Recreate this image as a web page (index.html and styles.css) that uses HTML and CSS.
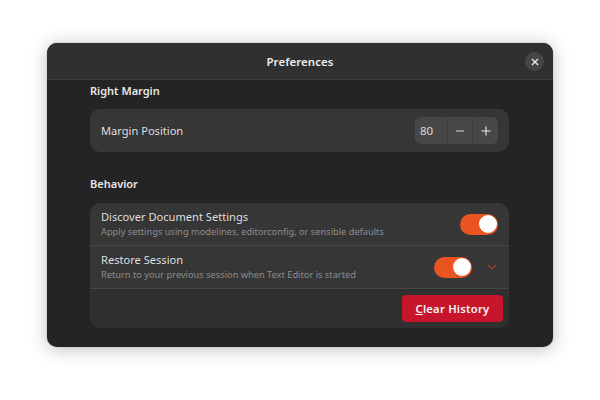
FILE: index.html
```html
<!DOCTYPE html>
<html lang="en">
<head>
<meta charset="utf-8">
<title>Preferences</title>
<link rel="stylesheet" href="styles.css">
</head>
<body>
<div class="window">
  <header class="header">
    <span class="title">Preferences</span>
    <button class="close" aria-label="Close">
      <svg width="8" height="8" viewBox="0 0 8 8"><path d="M1 1l6 6M7 1l-6 6" stroke="#eee" stroke-width="1.3" fill="none"/></svg>
    </button>
  </header>
  <main class="content">
    <h2 class="section-title first">Right Margin</h2>
    <section class="card">
      <div class="row margin-row">
        <span class="row-title">Margin Position</span>
        <div class="spin">
          <span class="spin-value">80</span>
          <span class="spin-btn minus"><svg width="10" height="10" viewBox="0 0 10 10"><path d="M1 5h8" stroke="#d8d8d8" stroke-width="1.1"/></svg></span>
          <span class="spin-btn"><svg width="10" height="10" viewBox="0 0 10 10"><path d="M.5 5h9M5 .5v9" stroke="#eee" stroke-width="1.1"/></svg></span>
        </div>
      </div>
    </section>
    <h2 class="section-title second">Behavior</h2>
    <section class="card">
      <div class="row tall">
        <div class="labels">
          <span class="row-title">Discover Document Settings</span>
          <span class="row-sub">Apply settings using modelines, editorconfig, or sensible defaults</span>
        </div>
        <span class="switch"><span class="knob"></span></span>
      </div>
      <div class="row tall session">
        <div class="labels">
          <span class="row-title">Restore Session</span>
          <span class="row-sub">Return to your previous session when Text Editor is started</span>
        </div>
        <span class="switch"><span class="knob"></span></span>
        <svg class="chevron" width="10" height="6" viewBox="0 0 10 6"><path d="M1.2 1l3.8 3.8L8.8 1" stroke="#9a4a2c" stroke-width="1.2" fill="none"/></svg>
      </div>
      <div class="row action">
        <button class="danger"><u>C</u>lear History</button>
      </div>
    </section>
  </main>
</div>
</body>
</html>
```
FILE: styles.css
```css
* { box-sizing: border-box; }
html, body { margin: 0; height: 100%; }
body {
  width: 600px;
  height: 400px;
  background: #fff;
  padding: 43px 47px 53px;
  font-family: "Noto Sans", "Open Sans", sans-serif;
  overflow: hidden;
}
.window {
  width: 506px;
  height: 304px;
  background: #242424;
  border-radius: 10px;
  box-shadow: 0 2px 18px rgba(0,0,0,.26), 0 0 1px rgba(0,0,0,.5);
  overflow: hidden;
  display: flex;
  flex-direction: column;
}
.header {
  height: 37px;
  flex: none;
  background: #303030;
  border-bottom: 1px solid #3f3f3f;
  display: flex;
  align-items: center;
  justify-content: center;
  position: relative;
}
.title {
  color: #eeeeee;
  font-size: 11.4px;
  font-weight: 600;
  letter-spacing: .1px;
}
.close {
  position: absolute;
  right: 9px;
  top: 9px;
  width: 19px;
  height: 19px;
  padding: 0;
  border: 0;
  border-radius: 50%;
  background: #464646;
  display: flex;
  align-items: center;
  justify-content: center;
}
.content {
  padding: 0 44px 0 43px;
  display: flex;
  flex-direction: column;
}
.section-title {
  margin: 0;
  color: #e8e8e8;
  font-size: 11px;
  font-weight: 600;
  line-height: 20px;
}
.first { margin-top: 1px; margin-bottom: 8px; }
.second { margin-top: 22px; margin-bottom: 9px; }
.card {
  background: #363636;
  border-radius: 10px;
  overflow: hidden;
  display: flex;
  flex-direction: column;
}
.row {
  display: flex;
  align-items: center;
  padding: 0 11px;
}
.margin-row { height: 43px; justify-content: space-between; }
.tall { height: 43px; border-bottom: 1px solid #474747; justify-content: space-between; }
.labels { display: flex; flex-direction: column; gap: 1px; margin-top: -1px; }
.row-title {
  color: #dedede;
  font-size: 11.1px;
  line-height: 15px;
}
.margin-row .row-title { margin-top: -1px; }
.row-sub {
  color: #8c8c8c;
  font-size: 9.25px;
  line-height: 13px;
}
.spin {
  display: flex;
  height: 27px;
  background: #474747;
  border-radius: 6px;
  overflow: hidden;
}
.spin-value {
  width: 32px;
  padding-left: 5px;
  color: #d8d8d8;
  font-size: 11.5px;
  line-height: 27px;
}
.spin-btn {
  width: 26px;
  border-left: 1px solid #3c3c3c;
  display: flex;
  align-items: center;
  justify-content: center;
}
.minus { width: 25px; }
.switch {
  width: 38px;
  height: 21px;
  border-radius: 11px;
  background: #e95420;
  display: flex;
  justify-content: flex-end;
  align-items: center;
  padding-right: 1px;
}
.knob {
  width: 18px;
  height: 18px;
  border-radius: 50%;
  background: #fff;
}
.session .switch { margin-left: auto; }
.chevron { margin-left: 15px; margin-right: 1px; }
.action {
  height: 39px;
  justify-content: flex-end;
  padding: 0 6px 0 0;
  background: #2f2f2f;
}
.danger {
  width: 101px;
  height: 27px;
  border: 0;
  border-radius: 4px;
  background: #c7162b;
  color: #f5f5f5;
  font-family: inherit;
  font-size: 11.2px;
  font-weight: 600;
  letter-spacing: .25px;
  padding: 0;
}
```
